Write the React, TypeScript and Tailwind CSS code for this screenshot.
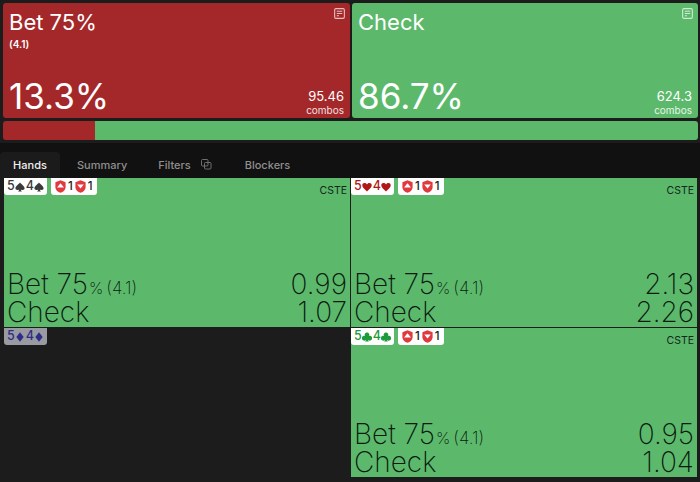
const GREEN = 'bg-[#5cb96b]'

function NoteIcon() {
  return (
    <svg width="11" height="11" viewBox="0 0 12 12" fill="none" className="text-white/70">
      <rect x="0.7" y="0.7" width="10.6" height="10.6" rx="1.5" stroke="currentColor" strokeWidth="1.2" />
      <path d="M3 3.6h6M3 6h6M3 8.4h2.5" stroke="currentColor" strokeWidth="1.1" />
    </svg>
  )
}

function SummaryCard({
  title,
  sub,
  percent,
  combos,
  color,
  className,
}: {
  title: string
  sub?: string
  percent: string
  combos: string
  color: string
  className: string
}) {
  return (
    <div className={`relative h-[115px] rounded-[3px] ${color} ${className} px-[6px] text-white`}>
      <div className="absolute right-[5px] top-[5px]">
        <NoteIcon />
      </div>
      <div className="mt-[6px] text-[22px] leading-[27px]">{title}</div>
      {sub && <div className="text-[10px] font-semibold leading-[16px]">{sub}</div>}
      <div className="absolute bottom-0 left-[6px] text-[35px] font-normal leading-[44px]">{percent}</div>
      <div className="absolute bottom-[2px] right-[6px] text-right">
        <div className="text-[13px] leading-[15px]">{combos}</div>
        <div className="text-[10px] leading-[12px] opacity-85">combos</div>
      </div>
    </div>
  )
}

function Shield({ down }: { down?: boolean }) {
  return (
    <svg width="11" height="13" viewBox="0 0 11 13">
      <path d="M5.5 0.3 10.6 2.3V7.2C10.6 9.8 8.4 11.8 5.5 12.8 2.6 11.8 0.4 9.8 0.4 7.2V2.3Z" fill="#e0393e" />
      {down ? <path d="M2.2 4.4h6.6L5.5 8.4Z" fill="#fff" /> : <path d="M5.5 3.2 9 7.6H2Z" fill="#fff" />}
    </svg>
  )
}

const SUIT_PATHS: Record<string, string> = {
  spade: 'M6 0.5C7.5 2.6 11.5 4.8 11.5 7.6 11.5 9.5 9.2 10.4 7 9 7.2 10 7.6 10.8 8.4 11.5H3.6C4.4 10.8 4.8 10 5 9 2.8 10.4 0.5 9.5 0.5 7.6 0.5 4.8 4.5 2.6 6 0.5Z',
  heart: 'M6 11.3C3.8 9.2 0.3 6.8 0.3 3.9 0.3 1.1 4.2 0 6 3 7.8 0 11.7 1.1 11.7 3.9 11.7 6.8 8.2 9.2 6 11.3Z',
  diamond: 'M6 0.4 10.4 6 6 11.6 1.6 6Z',
  club: 'M6 0.5A2.8 2.8 0 0 1 8.3 4.9 2.8 2.8 0 1 1 7 9C7.2 10 7.6 10.8 8.4 11.5H3.6C4.4 10.8 4.8 10 5 9A2.8 2.8 0 1 1 3.7 4.9 2.8 2.8 0 0 1 6 0.5Z',
}

function Suit({ name }: { name: string }) {
  return (
    <svg width="10" height="10" viewBox="0 0 12 12" fill="currentColor">
      <path d={SUIT_PATHS[name]} />
    </svg>
  )
}

function HandBadge({ suit, suitColor, dimmed }: { suit: string; suitColor: string; dimmed?: boolean }) {
  return (
    <div
      className={`flex h-[17px] w-[43px] items-center justify-center rounded-b-[3px] text-[12.5px] font-medium leading-none ${suitColor} ${
        dimmed ? 'bg-[#9a9aa2]' : 'bg-white'
      }`}
    >
      <span>5</span>
      <Suit name={suit} />
      <span className="ml-[1px]">4</span>
      <Suit name={suit} />
    </div>
  )
}

function BlockerBadge() {
  return (
    <div className="flex h-[17px] items-center gap-[2px] rounded-b-[3px] bg-white px-[4px] text-[11.5px] font-medium leading-none text-[#222]">
      <Shield />
      <span>1</span>
      <Shield down />
      <span>1</span>
    </div>
  )
}

function HandCell({
  suit,
  suitColor,
  bet,
  check,
}: {
  suit: string
  suitColor: string
  bet: string
  check: string
}) {
  return (
    <div className={`relative flex h-[149px] flex-col ${GREEN} text-[#0a1a10]`}>
      <div className="flex gap-[4px]">
        <HandBadge suit={suit} suitColor={suitColor} />
        <BlockerBadge />
      </div>
      <div className="absolute right-[3px] top-[6px] text-[10.5px] leading-[13px] text-[#12261a]">CSTE</div>
      <div className="mt-auto pb-[1px] pl-[3px] pr-[3px] text-[28px] font-[250] leading-[28px]">
        <div className="flex h-[28px] items-baseline justify-between">
          <div className="flex items-baseline">
            Bet 75
            <span className="ml-[1px] text-[16px] leading-none">%</span>
            <span className="ml-[3px] text-[17px] leading-none">(4.1)</span>
          </div>
          <span>{bet}</span>
        </div>
        <div className="flex h-[28px] items-baseline justify-between">
          <span>Check</span>
          <span>{check}</span>
        </div>
      </div>
    </div>
  )
}

export default function App() {
  return (
    <div className="flex h-[482px] w-[700px] flex-col overflow-hidden bg-[#111111] font-['Inter',sans-serif]">
      <div className="flex flex-col gap-[3px] bg-[#1c1c1c] px-[3px] pb-[3px] pr-[2px] pt-[3px]">
        <div className="flex gap-[2px]">
          <SummaryCard className="w-[347px]" title="Bet 75%" sub="(4.1)" percent="13.3%" combos="95.46" color="bg-[#a4282a]" />
          <SummaryCard className="flex-1" title="Check" percent="86.7%" combos="624.3" color={GREEN} />
        </div>
        <div className="flex h-[19px] overflow-hidden rounded-[3px]">
          <div className="w-[92px] bg-[#a4282a]" />
          <div className={`flex-1 ${GREEN}`} />
        </div>
      </div>

      <div className="mt-[9px] flex h-[26px] items-stretch text-[11px] font-medium">
        <div className="flex w-[60px] items-center justify-center rounded-t-[4px] bg-[#1b1b1b] text-[#f0f0f0]">
          Hands
        </div>
        <div className="ml-[17px] flex items-center text-[#8f8f8f]">Summary</div>
        <div className="ml-[31px] flex items-center gap-[10px] text-[#8f8f8f]">
          Filters
          <svg width="11" height="11" viewBox="0 0 11 11" fill="none" stroke="#6f6f6f" className="mb-[2px]">
            <rect x="0.5" y="0.5" width="6.5" height="6.5" rx="1" />
            <rect x="3.5" y="3.5" width="6.5" height="6.5" rx="1" />
          </svg>
        </div>
        <div className="ml-[33px] flex items-center text-[#8f8f8f]">Blockers</div>
      </div>

      <div className="flex-1 bg-[#1c1c1c] pl-[4px] pr-[3px]">
        <div className="grid grid-cols-[346px_1fr] gap-x-[1px] gap-y-[1px]">
          <HandCell suit="spade" suitColor="text-[#3a3a3a]" bet="0.99" check="1.07" />
          <HandCell suit="heart" suitColor="text-[#b01818]" bet="2.13" check="2.26" />
          <div className="h-[149px] bg-[#1c1c1c]">
            <div className="flex">
              <HandBadge suit="diamond" suitColor="text-[#2e2e86]" dimmed />
            </div>
          </div>
          <HandCell suit="club" suitColor="text-[#1d9a3a]" bet="0.95" check="1.04" />
        </div>
      </div>
    </div>
  )
}
